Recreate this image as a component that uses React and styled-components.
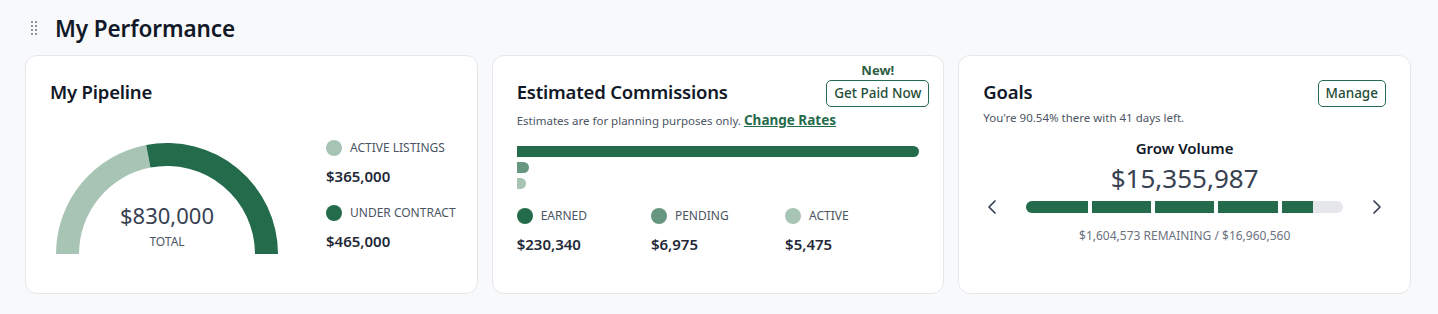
import styled, { createGlobalStyle } from "styled-components";

const GlobalStyle = createGlobalStyle`
  * { box-sizing: border-box; }
  body {
    margin: 0;
    background: #f8f9fb;
    font-family: "Noto Sans", "Open Sans", sans-serif;
    color: #111827;
  }
`;

const DARK = "#246b4b";
const MID = "#66967f";
const LIGHT = "#a7c4b5";

const Page = styled.div`
  padding: 14px 27px 20px 25px;
`;

const Header = styled.div`
  display: flex;
  align-items: center;
  gap: 18px;
  height: 28px;
  margin-left: 6px;
`;

const Handle = styled.div`
  display: grid;
  grid-template-columns: repeat(2, 2px);
  grid-auto-rows: 2px;
  column-gap: 2px;
  row-gap: 2px;
  span {
    background: #6b7280;
    border-radius: 1px;
  }
`;

const PageTitle = styled.h2`
  margin: 0;
  font-size: 22.5px;
  font-weight: 600;
  color: #111827;
  letter-spacing: -0.1px;
`;

const Cards = styled.div`
  display: grid;
  grid-template-columns: repeat(3, minmax(0, 1fr));
  gap: 14px;
  margin-top: 13px;
`;

const Card = styled.section`
  background: #fff;
  border: 1px solid #e5e7eb;
  border-radius: 12px;
  height: 239px;
  padding: 23px 24px 20px;
  display: flex;
  flex-direction: column;
`;

const CardHeader = styled.div`
  display: flex;
  align-items: center;
  justify-content: space-between;
  height: 28px;
`;

const CardTitle = styled.h3`
  margin: 0 0 4px;
  font-size: 18.5px;
  font-weight: 600;
  color: #111827;
  letter-spacing: -0.2px;
`;

const ButtonWrap = styled.div`
  position: relative;
  margin-right: ${(p) => p.$pull || "0"};
`;

const NewTag = styled.span`
  position: absolute;
  left: 0;
  right: 0;
  top: -19px;
  text-align: center;
  font-size: 13px;
  font-weight: 700;
  color: #2f5d45;
`;

const OutlineButton = styled.button`
  height: 27px;
  padding: 0 7px;
  border: 1px solid ${DARK};
  border-radius: 5px;
  background: #fff;
  color: #1f4d38;
  font-family: inherit;
  font-size: 13.5px;
  font-weight: 500;
  cursor: pointer;
`;

const Subtitle = styled.p`
  margin: ${(p) => p.$mt || "5px"} 0 0;
  font-size: 11.5px;
  line-height: 16px;
  color: #4b5563;
  a {
    color: ${DARK};
    font-weight: 700;
    font-size: 13.5px;
    text-decoration: underline;
    margin-left: 3px;
  }
`;

/* pipeline */
const PipelineBody = styled.div`
  display: flex;
  align-items: flex-start;
  margin-top: 9px;
`;

const Gauge = styled.div`
  position: relative;
  width: 222px;
  height: 111px;
  margin: 27px 0 0 6px;
  flex-shrink: 0;
  svg { display: block; }
`;

const GaugeText = styled.div`
  position: absolute;
  left: 0;
  right: 0;
  bottom: 4px;
  text-align: center;
  strong {
    display: block;
    font-size: 22px;
    font-weight: 400;
    color: #374151;
    line-height: 28px;
  }
  span {
    display: block;
    font-size: 12px;
    color: #4b5563;
    margin-top: 4px;
  }
`;

const Legend = styled.div`
  display: flex;
  flex-direction: column;
  margin-left: 48px;
  margin-top: 23px;
`;

const LegendItem = styled.div`
  display: flex;
  flex-direction: column;
  gap: 10px;
  margin-bottom: 18px;
`;

const Label = styled.div`
  display: flex;
  align-items: center;
  gap: 8px;
  font-size: 12px;
  color: #4b5563;
  text-transform: uppercase;
  white-space: nowrap;
`;

const Dot = styled.span`
  width: 16px;
  height: 16px;
  border-radius: 50%;
  background: ${(p) => p.$color};
  flex-shrink: 0;
`;

const Value = styled.div`
  font-size: 15px;
  font-weight: 600;
  color: #1f2937;
`;

/* commissions */
const Bars = styled.div`
  display: flex;
  flex-direction: column;
  gap: 5px;
  margin-top: 17px;
`;

const Bar = styled.div`
  height: 11px;
  background: ${(p) => p.$color};
  border-radius: 0 6px 6px 0;
`;

const CommissionLegend = styled.div`
  display: grid;
  grid-template-columns: repeat(3, 1fr);
  margin-top: 18px;
`;

/* goals */
const GoalBody = styled.div`
  display: flex;
  flex-direction: column;
  align-items: center;
  margin-top: 12px;
`;

const GoalName = styled.div`
  font-size: 15px;
  font-weight: 600;
  color: #111827;
`;

const GoalAmount = styled.div`
  font-size: 26px;
  color: #374151;
  margin-top: 3px;
  line-height: 34px;
`;

const ProgressRow = styled.div`
  display: grid;
  grid-template-columns: 43px 1fr 43px;
  align-items: center;
  width: 100%;
  margin-top: 4px;
`;

const Chevron = styled.button`
  border: 0;
  background: none;
  padding: 0;
  color: #374151;
  display: flex;
  justify-content: ${(p) => (p.$right ? "flex-end" : "flex-start")};
  margin: ${(p) => (p.$right ? "0 4px 0 0" : "0 0 0 4px")};
  cursor: pointer;
`;

const Track = styled.div`
  position: relative;
  height: 12px;
  border-radius: 6px;
  background: #e5e7eb;
  overflow: hidden;
`;

const Fill = styled.div`
  height: 100%;
  background: ${DARK};
`;

const Divider = styled.span`
  position: absolute;
  top: 0;
  bottom: 0;
  width: 4px;
  background: #fff;
`;

const Remaining = styled.div`
  margin-top: 12px;
  font-size: 12px;
  color: #6b7280;
`;

function arcPath(cx, cy, r1, r2, a0, a1) {
  // angles in degrees, 180 = left, 0 = right
  const rad = (a) => (a * Math.PI) / 180;
  const p = (r, a) => [cx + r * Math.cos(rad(a)), cy - r * Math.sin(rad(a))];
  const [x0, y0] = p(r1, a0);
  const [x1, y1] = p(r1, a1);
  const [x2, y2] = p(r2, a1);
  const [x3, y3] = p(r2, a0);
  return `M${x0} ${y0} A${r1} ${r1} 0 0 1 ${x1} ${y1} L${x2} ${y2} A${r2} ${r2} 0 0 0 ${x3} ${y3} Z`;
}

function PipelineGauge() {
  const split = 180 - (365000 / 830000) * 180;
  return (
    <Gauge>
      <svg width="222" height="111" viewBox="0 0 222 111">
        <path d={arcPath(111, 111, 111, 88, 180, split)} fill={LIGHT} />
        <path d={arcPath(111, 111, 111, 88, split, 0)} fill={DARK} />
      </svg>
      <GaugeText>
        <strong>$830,000</strong>
        <span>TOTAL</span>
      </GaugeText>
    </Gauge>
  );
}

const ChevronIcon = ({ dir }) => (
  <svg width="10" height="16" viewBox="0 0 10 16" fill="none" stroke="currentColor" strokeWidth="1.7" strokeLinecap="round" strokeLinejoin="round">
    {dir === "left" ? <path d="M8 2 2 8l6 6" /> : <path d="M2 2l6 6-6 6" />}
  </svg>
);

export default function App() {
  const pct = 90.54;
  return (
    <Page>
      <GlobalStyle />
      <Header>
        <Handle>
          {Array.from({ length: 8 }).map((_, i) => (
            <span key={i} />
          ))}
        </Handle>
        <PageTitle>My Performance</PageTitle>
      </Header>
      <Cards>
        <Card>
          <CardHeader>
            <CardTitle>My Pipeline</CardTitle>
          </CardHeader>
          <PipelineBody>
            <PipelineGauge />
            <Legend>
              <LegendItem>
                <Label>
                  <Dot $color={LIGHT} />
                  Active Listings
                </Label>
                <Value>$365,000</Value>
              </LegendItem>
              <LegendItem>
                <Label>
                  <Dot $color={DARK} />
                  Under Contract
                </Label>
                <Value>$465,000</Value>
              </LegendItem>
            </Legend>
          </PipelineBody>
        </Card>

        <Card>
          <CardHeader>
            <CardTitle>Estimated Commissions</CardTitle>
            <ButtonWrap $pull="-10px">
              <NewTag>New!</NewTag>
              <OutlineButton>Get Paid Now</OutlineButton>
            </ButtonWrap>
          </CardHeader>
          <Subtitle>
            Estimates are for planning purposes only.
            <a href="#">Change Rates</a>
          </Subtitle>
          <Bars>
            <Bar $color={DARK} style={{ width: "100%" }} />
            <Bar $color={MID} style={{ width: "12px" }} />
            <Bar $color={LIGHT} style={{ width: "9px" }} />
          </Bars>
          <CommissionLegend>
            <LegendItem>
              <Label>
                <Dot $color={DARK} />
                Earned
              </Label>
              <Value>$230,340</Value>
            </LegendItem>
            <LegendItem>
              <Label>
                <Dot $color={MID} />
                Pending
              </Label>
              <Value>$6,975</Value>
            </LegendItem>
            <LegendItem>
              <Label>
                <Dot $color={LIGHT} />
                Active
              </Label>
              <Value>$5,475</Value>
            </LegendItem>
          </CommissionLegend>
        </Card>

        <Card>
          <CardHeader>
            <CardTitle>Goals</CardTitle>
            <OutlineButton>Manage</OutlineButton>
          </CardHeader>
          <Subtitle $mt="3px">You're 90.54% there with 41 days left.</Subtitle>
          <GoalBody>
            <GoalName>Grow Volume</GoalName>
            <GoalAmount>$15,355,987</GoalAmount>
            <ProgressRow>
              <Chevron aria-label="previous">
                <ChevronIcon dir="left" />
              </Chevron>
              <Track>
                <Fill style={{ width: `${pct}%` }} />
                {[20, 40, 60, 80].map((d) => (
                  <Divider key={d} style={{ left: `calc(${d}% - 2px)` }} />
                ))}
              </Track>
              <Chevron $right aria-label="next">
                <ChevronIcon dir="right" />
              </Chevron>
            </ProgressRow>
            <Remaining>$1,604,573 REMAINING / $16,960,560</Remaining>
          </GoalBody>
        </Card>
      </Cards>
    </Page>
  );
}
